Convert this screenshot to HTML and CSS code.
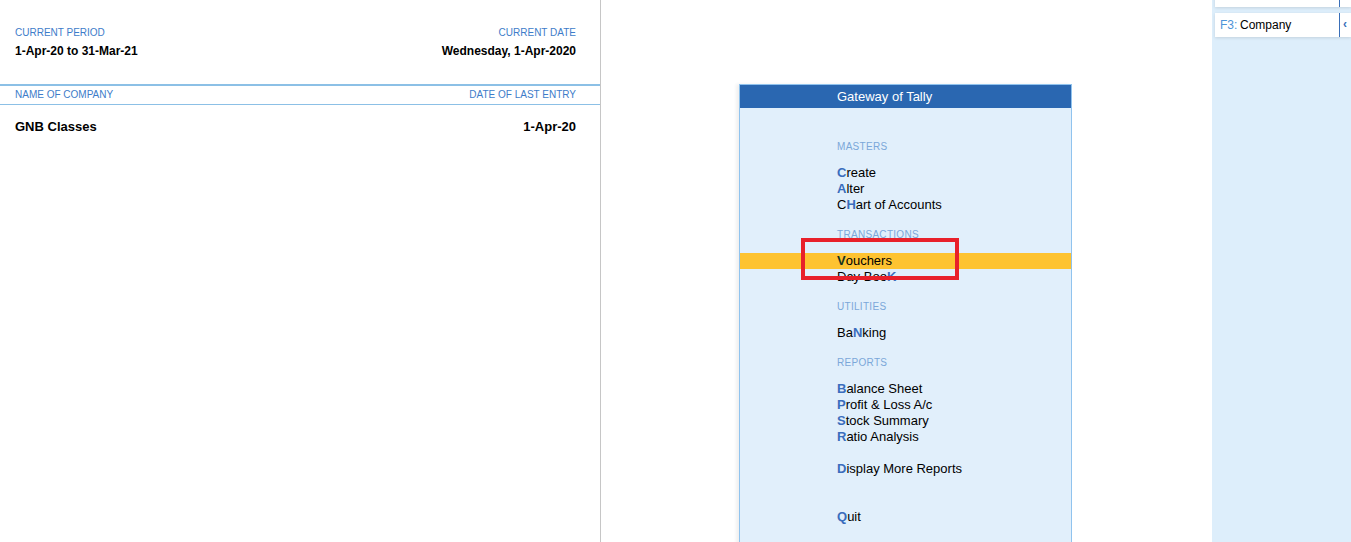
FILE: index.html
```html
<!DOCTYPE html>
<html lang="en">
<head>
    <meta charset="UTF-8">
    <title>Gateway of Tally</title>
    <link rel="stylesheet" href="styles.css">
</head>
<body>
<div class="info">
    <div class="row top">
        <div>
            <div class="lbl">CURRENT PERIOD</div>
            <div class="val">1-Apr-20 to 31-Mar-21</div>
        </div>
        <div class="right">
            <div class="lbl">CURRENT DATE</div>
            <div class="val">Wednesday, 1-Apr-2020</div>
        </div>
    </div>
    <div class="row head">
        <div class="lbl">NAME OF COMPANY</div>
        <div class="lbl">DATE OF LAST ENTRY</div>
    </div>
    <div class="row company">
        <div>GNB Classes</div>
        <div>1-Apr-20</div>
    </div>
</div>

<div class="middle">
    <div class="gateway">
        <div class="gtitle">Gateway of Tally</div>
        <div class="menu">
            <div class="sec first">MASTERS</div>
            <div class="item"><b>C</b>reate</div>
            <div class="item"><b>A</b>lter</div>
            <div class="item">C<b>H</b>art of Accounts</div>

            <div class="sec">TRANSACTIONS</div>
            <div class="item sel"><b>V</b>ouchers</div>
            <div class="item">Day Boo<b>K</b></div>

            <div class="sec">UTILITIES</div>
            <div class="item">Ba<b>N</b>king</div>

            <div class="sec">REPORTS</div>
            <div class="item"><b>B</b>alance Sheet</div>
            <div class="item"><b>P</b>rofit &amp; Loss A/c</div>
            <div class="item"><b>S</b>tock Summary</div>
            <div class="item"><b>R</b>atio Analysis</div>

            <div class="item gap1"><b>D</b>isplay More Reports</div>

            <div class="item gap2"><b>Q</b>uit</div>
        </div>
        <div class="mark"></div>
    </div>
</div>

<div class="keys">
    <div class="key"><span class="k">F2:</span><span class="t">Date</span><span class="arr">&lsaquo;</span></div>
    <div class="key"><span class="k">F3:</span><span class="t">Company</span><span class="arr">&lsaquo;</span></div>
</div>
</body>
</html>
```

FILE: styles.css
```css
*{
    padding: 0;
    margin: 0;
    box-sizing: border-box;
}
html,body{
    height: 100%;
    overflow: hidden;
}
body{
    display: flex;
    font-family: "Liberation Sans", Arial, sans-serif;
    color: #000;
    background: #fff;
}
.info{
    width: 601px;
    flex-shrink: 0;
    border-right: 1px solid #c6c6c6;
}
.row{
    display: flex;
    justify-content: space-between;
    padding: 0 24px 0 15px;
}
.right{
    text-align: right;
}
.lbl{
    font-size: 10px;
    line-height: 14px;
    color: #3d7cc9;
}
.val{
    font-size: 12px;
    font-weight: bold;
    line-height: 16px;
    margin-top: 3px;
}
.top{
    padding-top: 26px;
    height: 84px;
}
.head{
    border-top: 2px solid #8cc0e6;
    border-bottom: 1px solid #8cc0e6;
    height: 21px;
    align-items: center;
}
.company{
    margin-top: 14px;
    font-size: 13px;
    font-weight: bold;
    line-height: 16px;
}
.middle{
    flex-grow: 1;
}
.gateway{
    position: relative;
    width: 333px;
    margin: 84px 0 0 138px;
    height: 520px;
    background: #e1effb;
    border: 1px solid #90c3ee;
    border-bottom: none;
    box-shadow: -3px 0 3px rgba(0,0,0,0.06);
}
.gtitle{
    background: #2a67b1;
    color: #fff;
    font-size: 13px;
    height: 23px;
    line-height: 23px;
    padding-left: 97px;
}
.menu{
    font-size: 13px;
}
.sec{
    font-size: 10px;
    letter-spacing: 0.3px;
    color: #7ba7d9;
    line-height: 16px;
    padding-left: 97px;
    margin: 14px 0 10px;
}
.sec.first{
    margin-top: 31px;
}
.item{
    line-height: 16px;
    padding-left: 97px;
}
.item b{
    color: #3a6dbd;
}
.item.sel{
    background: #fec331;
}
.item.sel b{
    color: #17331f;
}
.gap1{
    margin-top: 16px;
}
.gap2{
    margin-top: 32px;
}
.mark{
    position: absolute;
    left: 61px;
    top: 153px;
    width: 158px;
    height: 42px;
    border: 4px solid #e8202a;
}
.keys{
    width: 139px;
    flex-shrink: 0;
    background: #ddeefb;
    padding-left: 3px;
    margin-top: -17px;
}
.key{
    display: flex;
    align-items: center;
    height: 24px;
    margin-bottom: 6px;
    background: #fff;
    box-shadow: 0 1px 3px rgba(0,0,0,0.12);
    font-size: 12px;
}
.key .k{
    color: #4d94d8;
    padding-left: 5px;
    width: 25px;
}
.key .t{
    flex-grow: 1;
}
.key .arr{
    width: 12px;
    height: 24px;
    line-height: 22px;
    border-left: 1px solid #3a6fb8;
    color: #3a6fb8;
    font-weight: bold;
    padding-left: 3px;
}
```
